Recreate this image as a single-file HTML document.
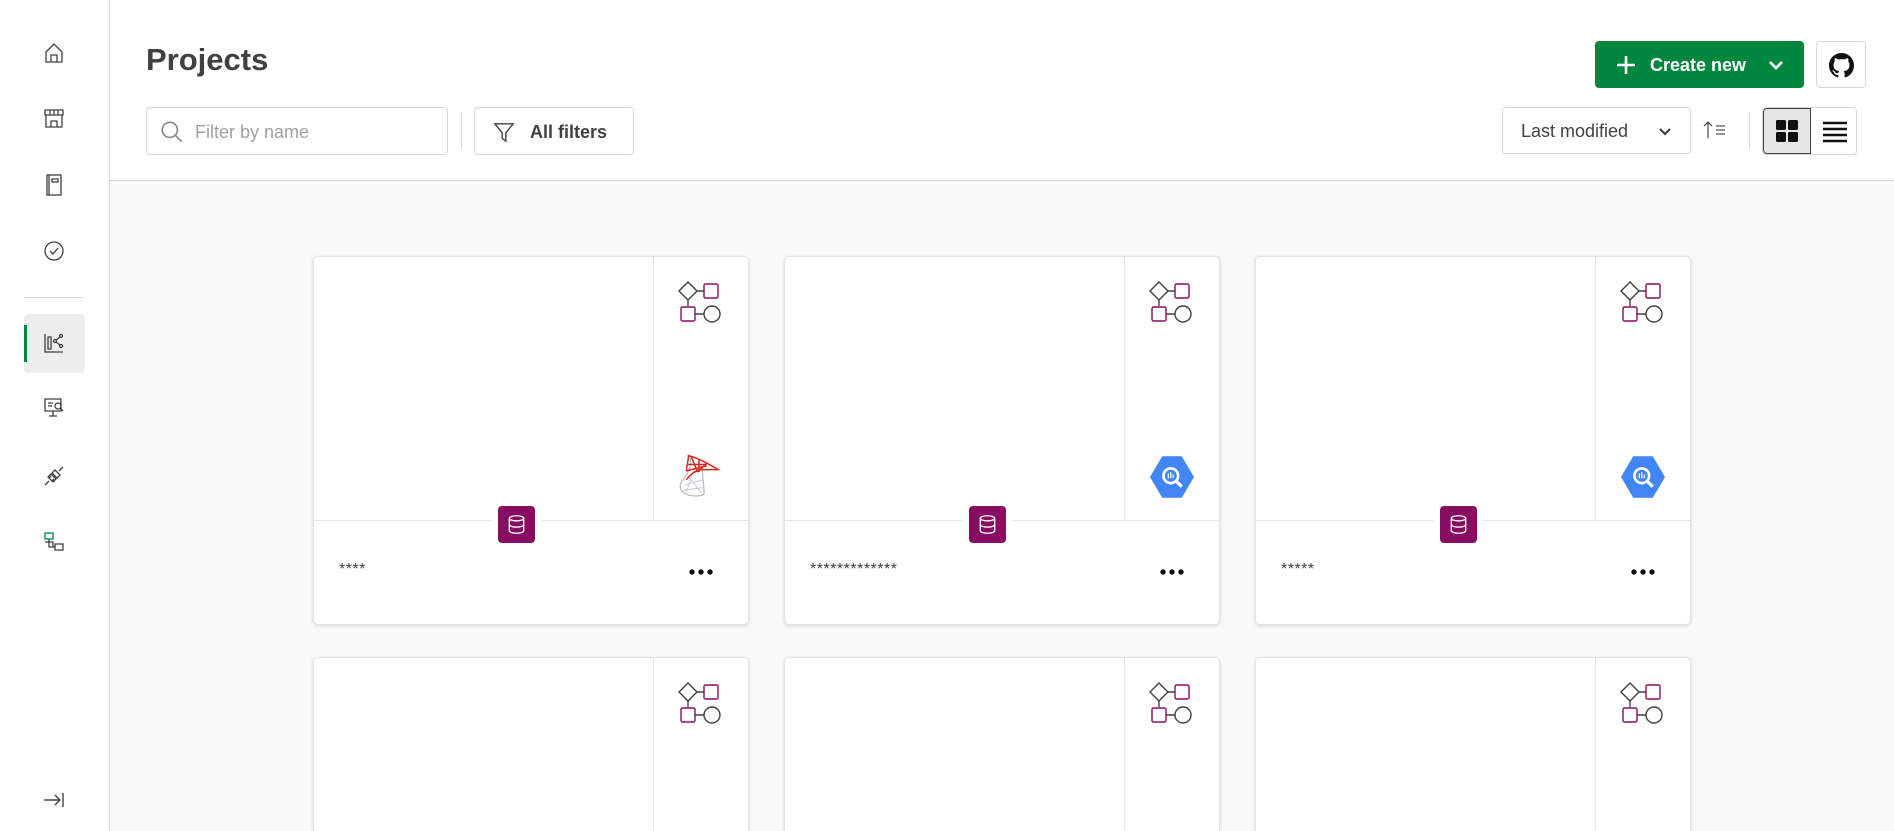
<!DOCTYPE html>
<html style="height:831px;overflow:hidden"><head><meta charset="utf-8"><style>
*{box-sizing:border-box;margin:0;padding:0}
body{width:1894px;height:831px;overflow:hidden;font-family:"Liberation Sans",sans-serif;background:#fff;position:relative;color:#404040}
.side{position:absolute;left:0;top:0;width:110px;height:831px;border-right:1px solid #d9d9d9;background:#fff;z-index:2}
.ic{position:absolute;left:42px;width:24px;height:24px}
.main{position:absolute;left:110px;top:0;right:0;height:181px;border-bottom:1px solid #d9d9d9;background:#fff}
.body{position:absolute;left:110px;top:181px;right:0;bottom:0;background:#f9f9f9;overflow:hidden}
.btn{position:absolute;border:1px solid #d9d9d9;border-radius:4px;background:#fff}
.card{position:absolute;width:436px;height:369px;background:#fff;border:1px solid #e3e3e3;border-radius:5px;box-shadow:0 1px 3px rgba(0,0,0,.15)}
.card.cut{height:174px;border-bottom:none;border-radius:5px 5px 0 0}
.card .vr{position:absolute;left:339px;top:0;height:263px;border-left:1px solid #e6e6e6}
.card .hr{position:absolute;left:0;right:0;top:263px;border-top:1px solid #e6e6e6}
.card .db{position:absolute;left:184px;top:249px;width:37px;height:37px;background:#870c62;border-radius:4px;box-shadow:0 0 0 6px #fff}
.card .nm{position:absolute;left:25px;top:304px;font-size:16px;letter-spacing:0.5px;color:#404040}
.card .dots{position:absolute;left:375px;top:312px;width:24px;height:6px}
.card .flow{position:absolute;left:362px;top:22px}
.card .logo{position:absolute;left:365px;top:194px}
</style></head><body>
<div class="side">
<svg class="ic" style="top:41px" viewBox="0 0 24 24" fill="none" stroke="#404040" stroke-width="1.3"><path d="M4 11L12 3l8 8v10H4z"/><path d="M9 21v-7h6v7"/></svg>
<svg class="ic" style="top:106px" viewBox="0 0 24 24" fill="none" stroke="#404040" stroke-width="1.3"><path d="M3 4h18v5H3zM4 9v12h16V9M9 21v-6h6v6M8 4v5M12 4v5M16 4v5"/></svg>
<svg class="ic" style="top:173px" viewBox="0 0 24 24" fill="none" stroke="#404040" stroke-width="1.3"><rect x="5" y="2" width="14" height="20"/><path d="M7 2v20M10 6h6v3h-6z"/></svg>
<svg class="ic" style="top:239px" viewBox="0 0 24 24" fill="none" stroke="#404040" stroke-width="1.3"><circle cx="12" cy="12" r="9"/><path d="M8 12l3 3 5-6"/></svg>
<div style="position:absolute;left:24px;top:297px;width:61px;border-top:1px solid #d9d9d9"></div>
<div style="position:absolute;left:24px;top:314px;width:61px;height:59px;background:#ededed;border-radius:4px"></div>
<div style="position:absolute;left:24px;top:325px;width:3px;height:37px;background:#00873d"></div>
<svg class="ic" style="top:331px" viewBox="0 0 24 24" fill="none" stroke="#404040" stroke-width="1.3"><path d="M3 3v18h18M6 6v12h3V6zM14 9l4-3M14 11l4 3"/><circle cx="13" cy="10" r="1.5"/><circle cx="19" cy="5" r="1.5"/><circle cx="19" cy="15" r="1.5"/></svg>
<svg class="ic" style="top:396px" viewBox="0 0 24 24" fill="none" stroke="#404040" stroke-width="1.3"><path d="M3 3h16v12H3zM11 15v5M7 20h8M6 7h5M6 10h4"/><circle cx="16" cy="10" r="3"/><path d="M18 12l3 3"/></svg>
<svg class="ic" style="top:464px" viewBox="0 0 24 24" fill="none" stroke="#404040" stroke-width="1.3"><path d="M3 21l4-4M21 3l-4 4M6 13l5 5 3-3-5-5zM13 6l5 5-3 3-5-5zM9 12l-2 2M12 15l-2 2"/></svg>
<svg class="ic" style="top:530px" viewBox="0 0 24 24" fill="none" stroke-width="1.3"><rect x="3" y="3" width="8" height="6" stroke="#00873d"/><rect x="13" y="14" width="8" height="6" stroke="#404040"/><path d="M7 9v8h6M3 12h8v5" stroke="#404040"/></svg>
<svg class="ic" style="top:788px" viewBox="0 0 24 24" fill="none" stroke="#404040" stroke-width="1.4"><path d="M2 12h16M13 7l5 5-5 5M21 5v14"/></svg>
</div>
<div class="main">
<div style="position:absolute;left:36px;top:42px;font-size:31px;font-weight:bold;color:#404040">Projects</div>
<div class="btn" style="left:36px;top:107px;width:302px;height:48px">
<svg style="position:absolute;left:12px;top:11px" width="26" height="26" viewBox="0 0 24 24" fill="none" stroke="#888" stroke-width="1.5"><circle cx="10" cy="10" r="7"/><path d="M15 15l6 6"/></svg>
<span style="position:absolute;left:48px;top:14px;font-size:18px;color:#a0a0a0">Filter by name</span></div>
<div style="position:absolute;left:351px;top:113px;height:36px;border-left:1px solid #d9d9d9"></div>
<div class="btn" style="left:364px;top:107px;width:160px;height:48px">
<svg style="position:absolute;left:18px;top:13px" width="22" height="22" viewBox="0 0 24 24" fill="none" stroke="#404040" stroke-width="1.5"><path d="M2 3h20l-8 10v9l-4-3v-6z"/></svg>
<span style="position:absolute;left:55px;top:14px;font-size:18px;font-weight:bold;color:#404040">All filters</span></div>
<div style="position:absolute;left:1485px;top:41px;width:209px;height:47px;background:#00873d;border-radius:4px;color:#fff">
<svg style="position:absolute;left:20px;top:13px" width="22" height="22" viewBox="0 0 22 22" stroke="#fff" stroke-width="2.6"><path d="M11 2v18M2 11h18"/></svg>
<span style="position:absolute;left:55px;top:14px;font-size:18px;font-weight:bold">Create new</span>
<svg style="position:absolute;left:172px;top:15px" width="18" height="18" viewBox="0 0 18 18" fill="none" stroke="#fff" stroke-width="2.6"><path d="M3 6l6 6 6-6"/></svg></div>
<div class="btn" style="left:1706px;top:41px;width:50px;height:47px">
<svg style="position:absolute;left:12px;top:11px" width="25" height="25" viewBox="0 0 16 16"><path fill="#111" d="M8 0C3.58 0 0 3.58 0 8c0 3.540 2.29 6.530 5.470 7.590.4.07.55-.17.55-.38v-1.330c-2.230.48-2.700-1.070-2.700-1.070-.36-.93-.89-1.170-.89-1.170-.73-.5.05-.49.05-.49.8.06 1.230.83 1.230.83.71 1.230 1.870.87 2.330.66.07-.52.28-.87.5-1.070-1.780-.2-3.640-.89-3.640-3.950 0-.87.31-1.590.82-2.150-.08-.2-.36-1.020.08-2.120 0 0 .67-.21 2.200.82a7.600 7.600 0 014 0c1.530-1.040 2.200-.82 2.200-.82.44 1.100.16 1.920.08 2.120.51.56.82 1.270.82 2.150 0 3.070-1.870 3.750-3.650 3.950.29.25.54.73.54 1.480v2.200c0 .21.15.46.55.38A8.010 8.010 0 0016 8c0-4.420-3.580-8-8-8z"/></svg></div>
<div class="btn" style="left:1392px;top:107px;width:189px;height:47px">
<span style="position:absolute;left:18px;top:13px;font-size:18px;color:#404040">Last modified</span>
<svg style="position:absolute;left:154px;top:16px" width="16" height="16" viewBox="0 0 16 16" fill="none" stroke="#404040" stroke-width="2.2"><path d="M3 5l5 5 5-5"/></svg></div>
<svg style="position:absolute;left:1592px;top:118px" width="26" height="24" viewBox="0 0 26 24" fill="none" stroke="#555" stroke-width="1.3"><path d="M6 20V4M2 8l4-4 4 4M14 8h9M14 12h9M14 16h9"/></svg>
<div style="position:absolute;left:1639px;top:113px;height:36px;border-left:1px solid #d9d9d9"></div>
<div class="btn" style="left:1652px;top:107px;width:95px;height:48px;overflow:hidden">
<div style="position:absolute;left:0;top:0;width:48px;height:46px;background:#e6e6e6;border:1px solid #404040;border-radius:4px 0 0 4px"></div>
<svg style="position:absolute;left:13px;top:12px" width="22" height="22" viewBox="0 0 22 22" fill="#111"><rect x="0" y="0" width="10" height="10" rx="1.5"/><rect x="12" y="0" width="10" height="10" rx="1.5"/><rect x="0" y="12" width="10" height="10" rx="1.5"/><rect x="12" y="12" width="10" height="10" rx="1.5"/></svg>
<svg style="position:absolute;left:60px;top:13px" width="24" height="22" viewBox="0 0 24 22" stroke="#111" stroke-width="2.4"><path d="M0 2h24M0 8h24M0 14h24M0 20h24"/></svg></div>
</div>
<div class="body"></div>

<svg width="0" height="0" style="position:absolute"><defs>
<g id="flow" fill="none" stroke-width="1.4"><path d="M12 3l9 9-9 9-9-9z" stroke="#404040"/><path d="M21 12h7M12 21v6M19 35h9" stroke="#404040"/><rect x="28" y="5" width="14" height="14" rx="1.5" stroke="#870c62"/><rect x="5" y="28" width="14" height="14" rx="1.5" stroke="#870c62"/><circle cx="36" cy="35" r="8" stroke="#404040"/></g>
<g id="dbi" fill="none" stroke="#fff" stroke-width="1.3"><ellipse cx="12" cy="6" rx="7" ry="2.5"/><path d="M5 6v12c0 1.4 3 2.5 7 2.5s7-1.1 7-2.5V6M5 12c0 1.4 3 2.5 7 2.5s7-1.1 7-2.5"/></g>
<g id="bq"><path d="M12 1h16l10 17-10 17H12L2 18z" fill="#4285f4"/><circle cx="19" cy="17" r="6" fill="none" stroke="#fff" stroke-width="2.2"/><path d="M23 21l5 5" stroke="#fff" stroke-width="2.6"/><path d="M17 15v4M19 14v5M21 16v3" stroke="#fff" stroke-width="1"/></g>
<g id="sql" fill="none"><path d="M10 2c3 6 2 12-6 22-2 4 0 8 6 10 4 1 9 1 12-1 0-8-2-14-1-20" stroke="#b8bcc0" stroke-width="1"/><path d="M7 26l14-4M6 30l16-2M10 20l10 12M14 14l-6 18" stroke="#c8ccd0" stroke-width="0.8"/><path d="M9 3c6 1 14 5 24 11l-14 0c-4 1-8 4-11 8M12 4l5 12M18 6l0 10M24 9l-6 6M10 3l-2 12M9 10l15 0M8 15l16-4" stroke="#d42a20" stroke-width="1.2"/></g>
</defs></svg>

<div class="card" style="left:313px;top:256px"><div class="vr"></div><div class="hr"></div><div class="db"><svg width="37" height="37" viewBox="-6 -6 36 36"><use href="#dbi"/></svg></div><svg class="flow" width="48" height="48"><use href="#flow"/></svg><svg class="logo" style="left:362px;top:194px" width="46" height="50" viewBox="0 0 36 38"><use href="#sql"/></svg><div class="nm">****</div><svg class="dots" viewBox="0 0 24 6" fill="#111"><circle cx="3" cy="3" r="2.7"/><circle cx="12" cy="3" r="2.7"/><circle cx="21" cy="3" r="2.7"/></svg></div>
<div class="card" style="left:784px;top:256px"><div class="vr"></div><div class="hr"></div><div class="db"><svg width="37" height="37" viewBox="-6 -6 36 36"><use href="#dbi"/></svg></div><svg class="flow" width="48" height="48"><use href="#flow"/></svg><svg class="logo" style="left:362px;top:198px" width="50" height="44" viewBox="0 0 40 36"><use href="#bq"/></svg><div class="nm">*************</div><svg class="dots" viewBox="0 0 24 6" fill="#111"><circle cx="3" cy="3" r="2.7"/><circle cx="12" cy="3" r="2.7"/><circle cx="21" cy="3" r="2.7"/></svg></div>
<div class="card" style="left:1255px;top:256px"><div class="vr"></div><div class="hr"></div><div class="db"><svg width="37" height="37" viewBox="-6 -6 36 36"><use href="#dbi"/></svg></div><svg class="flow" width="48" height="48"><use href="#flow"/></svg><svg class="logo" style="left:362px;top:198px" width="50" height="44" viewBox="0 0 40 36"><use href="#bq"/></svg><div class="nm">*****</div><svg class="dots" viewBox="0 0 24 6" fill="#111"><circle cx="3" cy="3" r="2.7"/><circle cx="12" cy="3" r="2.7"/><circle cx="21" cy="3" r="2.7"/></svg></div>
<div class="card cut" style="left:313px;top:657px"><div class="vr"></div><svg class="flow" width="48" height="48"><use href="#flow"/></svg></div>
<div class="card cut" style="left:784px;top:657px"><div class="vr"></div><svg class="flow" width="48" height="48"><use href="#flow"/></svg></div>
<div class="card cut" style="left:1255px;top:657px"><div class="vr"></div><svg class="flow" width="48" height="48"><use href="#flow"/></svg></div>
</body></html>
